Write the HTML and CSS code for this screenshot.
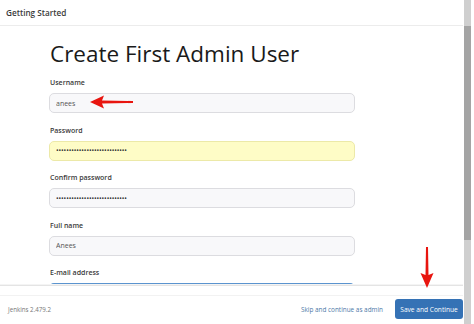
FILE: index.html
```html
<!DOCTYPE html>
<html lang="en">
<head>
    <meta charset="UTF-8">
    <meta name="viewport" content="width=device-width, initial-scale=1.0">
    <title>Getting Started</title>
    <link rel="stylesheet" href="styles.css">
</head>
<body>
    <div class="page">
        <div class="dialog">
            <header>
                <h3>Getting Started</h3>
            </header>
            <div class="content">
                <h1>Create First Admin User</h1>
                <form>
                    <div class="field">
                        <label for="username">Username</label>
                        <input type="text" id="username" value="anees">
                    </div>
                    <div class="field">
                        <label for="password">Password</label>
                        <input type="text" id="password" class="autofill dots" value="••••••••••••••••••••••••••••">
                    </div>
                    <div class="field">
                        <label for="confirm">Confirm password</label>
                        <input type="text" id="confirm" class="dots" value="••••••••••••••••••••••••••••">
                    </div>
                    <div class="field">
                        <label for="fullname">Full name</label>
                        <input type="text" id="fullname" value="Anees">
                    </div>
                    <div class="field">
                        <label for="email">E-mail address</label>
                        <input type="text" id="email" class="focused" value="">
                    </div>
                </form>
            </div>
            <footer>
                <span class="version">Jenkins 2.479.2</span>
                <div class="actions">
                    <a href="#" class="skip">Skip and continue as admin</a>
                    <button type="button">Save and Continue</button>
                </div>
            </footer>
        </div>
        <div class="scrollbar">
            <div class="thumb"></div>
        </div>
    </div>

    <!-- annotation arrows -->
    <svg class="arrow arrow-left" width="44" height="14" viewBox="0 0 44 14">
        <path d="M0 7 L14 0.5 L12 5.5 L43 6 L43 8 L12 8.5 L14 13.5 Z" fill="#e8150f"/>
    </svg>
    <svg class="arrow arrow-down" width="14" height="42" viewBox="0 0 14 42">
        <path d="M6 0 L8 0 L8.5 28 L13.5 26 L7 41 L0.5 26 L5.5 28 Z" fill="#e8150f"/>
    </svg>
</body>
</html>
```

FILE: styles.css
```css
* {
    margin: 0;
    padding: 0;
    box-sizing: border-box;
}
body {
    font-family: "Open Sans", "Noto Sans", sans-serif;
    background-color: #fff;
    color: #222;
    width: 474px;
    height: 324px;
    overflow: hidden;
}
.page {
    display: flex;
    height: 324px;
    padding-right: 3px;
}
.dialog {
    flex: 1;
    display: flex;
    flex-direction: column;
    min-width: 0;
}
header {
    height: 26px;
    border-bottom: 1px solid #ececec;
    display: flex;
    align-items: center;
    padding-left: 6px;
}
header h3 {
    font-size: 8.2px;
    font-weight: 600;
    color: #3a3a3a;
}
.content {
    flex: 1;
    overflow: hidden;
    padding: 13px 0 0 49px;
}
h1 {
    font-size: 22.5px;
    font-weight: 400;
    line-height: 30px;
    color: #1a1a1a;
    margin-bottom: 8px;
    padding-left: 1px;
}
.field {
    margin-bottom: 11.5px;
    width: 306px;
}
.field label {
    display: block;
    font-size: 7px;
    font-weight: 600;
    line-height: 12px;
    color: #3a3a3a;
    margin-bottom: 4px;
    padding-left: 1px;
}
.field input {
    display: block;
    width: 100%;
    height: 20px;
    border: 1px solid #dcdce0;
    border-radius: 5px;
    background-color: #f8f8fa;
    font-family: inherit;
    font-size: 7px;
    color: #555;
    padding: 0 6px;
    outline: none;
}
.field input.dots {
    font-size: 7px;
    letter-spacing: -0.1px;
    color: #333;
}
.field input.autofill {
    background-color: #fefcc6;
    border-color: #ece9a8;
}
.field input.focused {
    border: 2px solid #5b94cf;
    background-color: #fff;
}
footer {
    height: 39px;
    border-top: 1px solid #e4e4e4;
    box-shadow: 0 -1px 0 #f4f4f4, inset 0 9px 0 #fff, inset 0 10px 0 #f2f2f2;
    display: flex;
    align-items: center;
    justify-content: space-between;
    padding: 8px 0 0 8px;
}
.version {
    font-size: 6.2px;
    color: #777;
}
.actions {
    display: flex;
    align-items: center;
    gap: 12px;
}
.skip {
    font-size: 6.4px;
    color: #4d79a8;
    text-decoration: none;
}
button {
    background-color: #3572b5;
    color: #fff;
    border: none;
    border-radius: 3px;
    font-family: inherit;
    font-size: 6.6px;
    height: 20px;
    width: 68px;
    cursor: pointer;
}
.scrollbar {
    width: 7px;
    margin-left: 1px;
    background-color: #cfcfcf;
    padding-top: 26px;
}
.thumb {
    height: 214px;
    background-color: #a4a4a4;
}
.arrow {
    position: absolute;
}
.arrow-left {
    left: 90px;
    top: 95px;
}
.arrow-down {
    left: 420px;
    top: 247px;
}
```
